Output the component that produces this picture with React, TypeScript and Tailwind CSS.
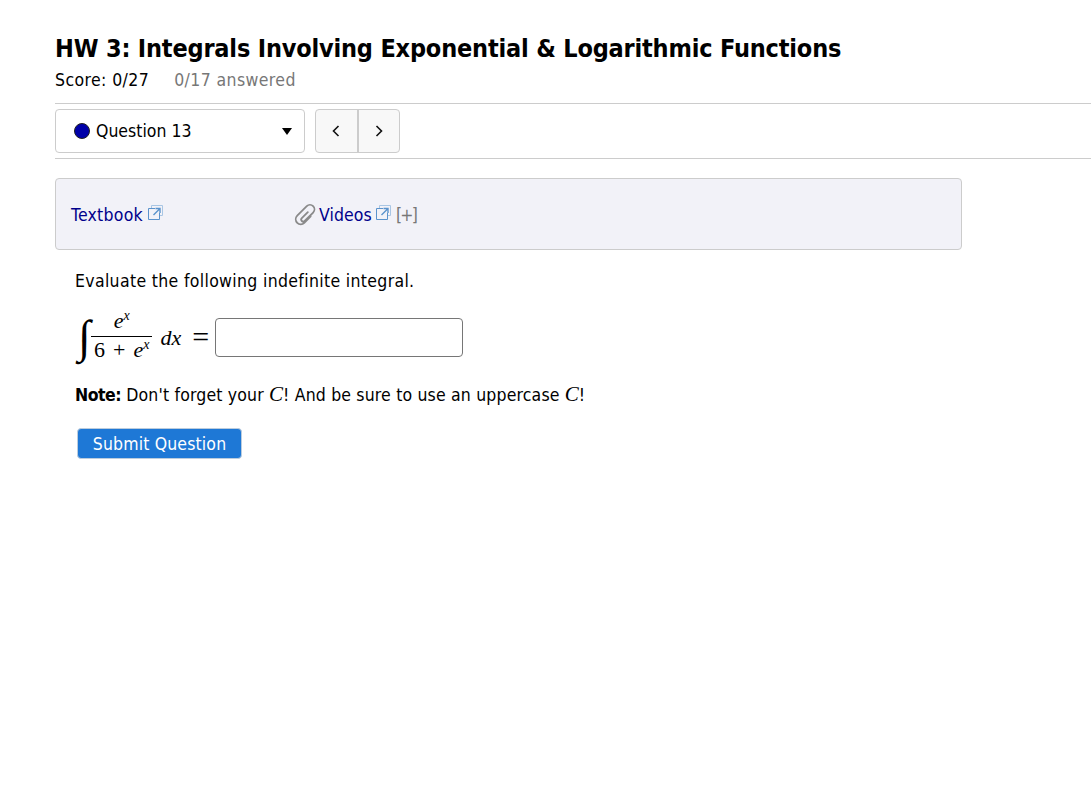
import React from "react";

const Ext = () => (
  <svg width="15" height="15" viewBox="0 0 15 15" fill="none" className="inline-block">
    <path d="M3.5 3.5V.5h11v10h-3" stroke="#a9c6e4" strokeWidth="1" />
    <path d="M11.5 8v6.5H.5v-11H7" stroke="#5b93cc" strokeWidth="1" />
    <path d="M5.5 10 11.5 4M7.5 3.5h4.5V8" stroke="#5b93cc" strokeWidth="1.4" />
  </svg>
);

const Clip = () => (
  <svg width="20" height="20" viewBox="0 0 20 20" fill="none" stroke="#8a8a8a" strokeWidth="1.8" strokeLinecap="round" strokeLinejoin="round" className="overflow-visible">
    <g transform="rotate(45 10 10)">
      <path d="M10 6V14.5a2 2 0 0 0 4 0V2.5a4.5 4.5 0 0 0-9 0V16a5 5 0 0 0 10 0V7" />
    </g>
  </svg>
);

const M = ({ children, className = "" }: { children: React.ReactNode; className?: string }) => (
  <span className={`font-['Liberation_Serif',serif] font-stretch-normal font-normal tracking-normal ${className}`}>{children}</span>
);

export default function App() {
  return (
    <div className="min-h-[798px] bg-white pl-[55px] pt-[32px] text-[17.5px] text-black font-['DejaVu_Sans',sans-serif] font-stretch-condensed">
      <h1 className="text-[25px] leading-[34px] font-bold whitespace-nowrap tracking-[-0.18px]">HW 3: Integrals Involving Exponential &amp; Logarithmic Functions</h1>
      <div className="flex gap-[25px] leading-[22px] mt-[3px] tracking-[0.4px]">
        <span>Score: 0/27</span>
        <span className="text-[#777777]">0/17 answered</span>
      </div>
      <div className="mt-[12px] border-t border-b border-[#cccccc] pt-[5px] pb-[5px] flex gap-[10px]">
        <div className="w-[250px] h-[44px] border border-[#cccccc] rounded-[4px] flex items-center pl-[18px] pr-[12px]">
          <span className="w-[16px] h-[16px] rounded-full bg-[#0000a8] border border-[#222222] mr-[6px]" />
          <span>Question 13</span>
          <span className="ml-auto w-0 h-0 border-x-[5px] border-x-transparent border-t-[7px] border-t-black" />
        </div>
        <div className="flex h-[44px] w-[85px] border border-[#cccccc] rounded-[4px] bg-[#f8f8f8]">
          <div className="flex-1 flex items-center justify-center border-r-2 border-[#cccccc]">
            <svg width="8" height="12" viewBox="0 0 8 12" fill="none" stroke="#111" strokeWidth="1.6"><path d="M6.5 1 1.5 6l5 5" /></svg>
          </div>
          <div className="flex-1 flex items-center justify-center">
            <svg width="8" height="12" viewBox="0 0 8 12" fill="none" stroke="#111" strokeWidth="1.6"><path d="M1.5 1l5 5-5 5" /></svg>
          </div>
        </div>
      </div>
      <div className="mt-[19px] w-[907px] h-[72px] bg-[#f2f2f8] border border-[#cccccc] rounded-[4px] flex items-center pl-[15px] pt-[2px] tracking-[0.25px]">
        <div className="w-[224px] flex items-center gap-[5px] text-[#00008b]">
          <span>Textbook</span>
          <span className="-mt-[6px] flex"><Ext /></span>
        </div>
        <div className="flex items-center text-[#00008b]">
          <span className="flex"><Clip /></span>
          <span className="ml-[4px] tracking-[0.1px]">Videos</span>
          <span className="ml-[4px] -mt-[6px] flex"><Ext /></span>
          <span className="ml-[5px] text-[#777777] tracking-[-1.8px]">[+]</span>
        </div>
      </div>
      <div className="pl-[20px]">
        <p className="mt-[20px] leading-[22px] tracking-[0.33px]">Evaluate the following indefinite integral.</p>
        <div className="mt-[13px] flex items-center h-[64px]">
          <M className="text-[46px] leading-none italic w-[16px] pl-[3px]">∫</M>
          <div className="flex flex-col items-center">
            <M className="text-[22px] leading-[24px] px-[2px] italic">e<span className="relative -top-[8px] text-[14px] italic">x</span></M>
            <M className="border-t border-black text-[22px] leading-[25px] px-[3px]">6<span className="mx-[8px]">+</span><i>e</i><span className="relative -top-[8px] text-[14px] italic">x</span></M>
          </div>
          <M className="ml-[8px] text-[22px] italic tracking-[1px]">dx</M>
          <M className="ml-[11px] text-[30px] leading-none">=</M>
          <div className="ml-[6px] w-[248px] h-[39px] border border-[#767676] rounded-[4px] bg-white" />
        </div>
        <p className="mt-[13px] leading-[24px] tracking-[0.17px]">
          <b className="font-bold tracking-[-0.5px]">Note:</b> Don't forget your <M className="italic text-[21px]">C</M>! And be sure to use an uppercase <M className="italic text-[21px]">C</M>!
        </p>
        <button className="mt-[21px] ml-[2px] w-[165px] h-[31px] bg-[#1e78d6] border border-[#bbccdd] rounded-[4px] text-white font-medium text-[17.5px] leading-none pt-[2px] tracking-[0.15px]">Submit Question</button>
      </div>
    </div>
  );
}
